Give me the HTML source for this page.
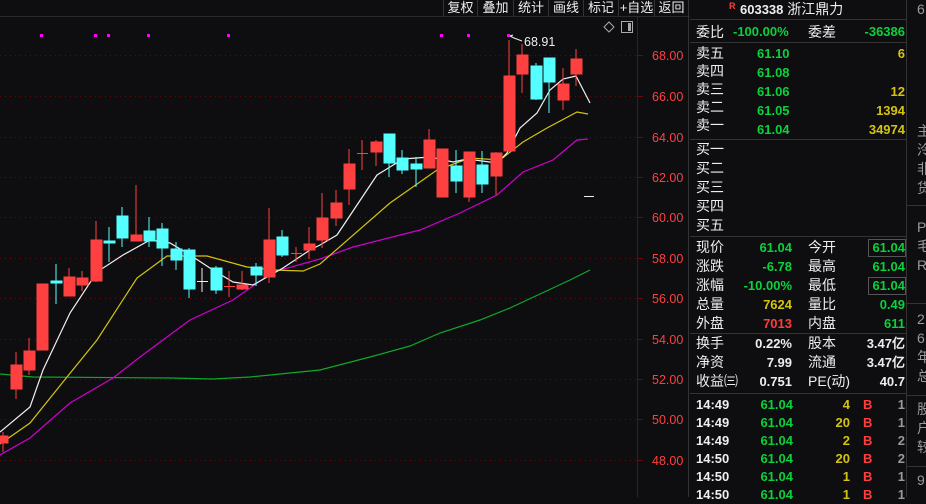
<!DOCTYPE html>
<html><head><meta charset="utf-8"><style>
*{margin:0;padding:0;box-sizing:border-box}
body{width:926px;height:497px;background:#0e0e11;overflow:hidden;position:relative;font-family:"Liberation Sans","Noto Sans CJK SC",sans-serif;color:#fff}
.tb{position:absolute;top:0;height:16px;font-size:13px;line-height:16px;color:#eee;border-left:1px solid #333}
.p{position:absolute;font-size:14px;line-height:18px;white-space:nowrap}
.w{color:#eee}.g{color:#0bd13b}.y{color:#d4c40f}.r{color:#ff3d3d}.gr{color:#999}
.num{font-family:"Liberation Sans",sans-serif;font-weight:bold}
.rt{text-align:right}
.hl{position:absolute;left:690px;width:216px;height:1px;background:#333}
.box{position:absolute;border:1px solid #555}
</style></head><body>
<div style="position:absolute;left:0;top:16px;width:690px;height:1px;background:#2a2a2a"></div>
<div class="tb" style="left:443px;width:34px;text-align:center">复权</div>
<div class="tb" style="left:477px;width:36px;text-align:center">叠加</div>
<div class="tb" style="left:513px;width:35px;text-align:center">统计</div>
<div class="tb" style="left:548px;width:35px;text-align:center">画线</div>
<div class="tb" style="left:583px;width:35px;text-align:center">标记</div>
<div class="tb" style="left:618px;width:36px;text-align:center">+自选</div>
<div class="tb" style="left:654px;width:34px;text-align:center">返回</div>
<svg style="position:absolute;left:0;top:0" width="690" height="497">
<g stroke="#6a0a0a" stroke-dasharray="1,4" stroke-width="1">
<line x1="0" y1="55.5" x2="637" y2="55.5"/><line x1="0" y1="96.5" x2="637" y2="96.5"/><line x1="0" y1="137.5" x2="637" y2="137.5"/><line x1="0" y1="177.5" x2="637" y2="177.5"/><line x1="0" y1="217.5" x2="637" y2="217.5"/><line x1="0" y1="258.5" x2="637" y2="258.5"/><line x1="0" y1="298.5" x2="637" y2="298.5"/><line x1="0" y1="339.5" x2="637" y2="339.5"/><line x1="0" y1="379.5" x2="637" y2="379.5"/><line x1="0" y1="419.5" x2="637" y2="419.5"/><line x1="0" y1="460.5" x2="637" y2="460.5"/>
</g>
<line x1="637.5" y1="17" x2="637.5" y2="497" stroke="#6a0a0a"/>
<g stroke="#6a0a0a"><line x1="637" y1="55.5" x2="643" y2="55.5"/><line x1="637" y1="96.5" x2="643" y2="96.5"/><line x1="637" y1="137.5" x2="643" y2="137.5"/><line x1="637" y1="177.5" x2="643" y2="177.5"/><line x1="637" y1="217.5" x2="643" y2="217.5"/><line x1="637" y1="258.5" x2="643" y2="258.5"/><line x1="637" y1="298.5" x2="643" y2="298.5"/><line x1="637" y1="339.5" x2="643" y2="339.5"/><line x1="637" y1="379.5" x2="643" y2="379.5"/><line x1="637" y1="419.5" x2="643" y2="419.5"/><line x1="637" y1="460.5" x2="643" y2="460.5"/></g>
<g fill="#ff4040" font-size="12.5" font-family="Liberation Sans">
<text x="652" y="60">68.00</text><text x="652" y="101">66.00</text><text x="652" y="142">64.00</text><text x="652" y="182">62.00</text><text x="652" y="222">60.00</text><text x="652" y="263">58.00</text><text x="652" y="303">56.00</text><text x="652" y="344">54.00</text><text x="652" y="384">52.00</text><text x="652" y="424">50.00</text><text x="652" y="465">48.00</text></g>
<path d="M609 22 l5 5 -5 5 -5 -5z" fill="none" stroke="#aaa"/>
<rect x="621.5" y="21.5" width="11" height="11" fill="none" stroke="#aaa"/><rect x="628" y="23" width="3" height="8" fill="#aaa"/>
<g fill="#ff00ff"><rect x="40" y="34" width="3" height="3"/><rect x="94" y="34" width="3" height="3"/><rect x="107" y="34" width="3" height="3"/><rect x="147" y="34" width="3" height="3"/><rect x="227" y="34" width="3" height="3"/><rect x="440" y="34" width="3" height="3"/><rect x="467" y="34" width="3" height="3"/><rect x="507" y="34" width="3" height="3"/></g>
<polyline fill="none" stroke="#0fa82a" stroke-width="1.2" points="0,374 33,377 170,378 213,379 250,377 300,372 320,370 370,357 410,346 440,333 480,320 510,308 540,294 570,280 590,270"/>
<polyline fill="none" stroke="#d000d0" stroke-width="1.2" points="0,455 30,438 70,403 113,378 140,357 167,337 190,320 233,300 273,272 320,259 353,247 420,230 460,213 497,195 523,172 553,160 577,140 588,139"/>
<polyline fill="none" stroke="#d4c40f" stroke-width="1.2" points="0,444 30,423 67,377 97,340 137,278 167,256 207,256 247,267 273,270 303,271 320,264 390,203 437,170 470,158 500,160 523,142 547,128 577,112 588,114"/>
<polyline fill="none" stroke="#f0f0f0" stroke-width="1.2" points="0,432 30,407 43,370 70,313 97,272 123,255 150,240 170,243 187,253 213,270 233,282 253,285 283,268 310,250 320,245 337,235 377,175 403,159 430,157 453,162 467,159 497,163 507,153 520,128 537,113 550,90 563,79 576,76 590,103"/>
<g stroke="#ff4040" fill="#ff4040">
<line x1="3" y1="432" x2="3" y2="452"/><rect x="-2" y="436" width="10" height="7"/>
<line x1="16" y1="352" x2="16" y2="399"/><rect x="11" y="365" width="11" height="24"/>
<line x1="29" y1="338" x2="29" y2="375"/><rect x="24" y="351" width="11" height="19"/>
<rect x="37" y="284" width="11" height="66"/>
<line x1="69" y1="268" x2="69" y2="296"/><rect x="64" y="277" width="11" height="19"/>
<line x1="82" y1="271" x2="82" y2="291"/><rect x="77" y="278" width="11" height="7"/>
<line x1="96" y1="221" x2="96" y2="282"/><rect x="91" y="240" width="11" height="41"/>
<line x1="136" y1="185" x2="136" y2="241"/><rect x="131" y="235" width="11" height="6"/>
<line x1="229" y1="271" x2="229" y2="297"/><line x1="224" y1="286.5" x2="235" y2="286.5"/>
<line x1="242" y1="271" x2="242" y2="290"/><rect x="237" y="285" width="11" height="4"/>
<line x1="269" y1="208" x2="269" y2="283"/><rect x="264" y="240" width="11" height="37"/>
<line x1="296" y1="247" x2="296" y2="262"/><line x1="291" y1="253.5" x2="302" y2="253.5"/>
<line x1="309" y1="227" x2="309" y2="259"/><rect x="304" y="244" width="11" height="6"/>
<line x1="322" y1="193" x2="322" y2="248"/><rect x="317" y="218" width="11" height="22"/>
<line x1="336" y1="190" x2="336" y2="226"/><rect x="331" y="203" width="11" height="15"/>
<line x1="349" y1="149" x2="349" y2="205"/><rect x="344" y="164" width="11" height="25"/>
<line x1="362" y1="140" x2="362" y2="170"/><line x1="357" y1="153.5" x2="368" y2="153.5"/>
<line x1="376" y1="140" x2="376" y2="166"/><rect x="371" y="142" width="11" height="10"/>
<line x1="429" y1="129" x2="429" y2="168"/><rect x="424" y="140" width="11" height="28"/>
<rect x="437" y="149" width="11" height="48"/>
<line x1="469" y1="152" x2="469" y2="202"/><rect x="464" y="152" width="11" height="45"/>
<line x1="496" y1="152" x2="496" y2="195"/><rect x="491" y="153" width="11" height="23"/>
<line x1="509" y1="40" x2="509" y2="151"/><rect x="504" y="76" width="11" height="75"/>
<line x1="522" y1="44" x2="522" y2="93"/><rect x="517" y="55" width="11" height="19"/>
<line x1="563" y1="68" x2="563" y2="110"/><rect x="558" y="84" width="11" height="16"/>
<line x1="576" y1="49" x2="576" y2="86"/><rect x="571" y="59" width="11" height="15"/>
</g>
<g stroke="#55ffff" fill="#55ffff">
<line x1="56" y1="264" x2="56" y2="304"/><rect x="51" y="281" width="11" height="2"/>
<line x1="109" y1="227" x2="109" y2="262"/><rect x="104" y="241" width="11" height="2"/>
<line x1="122" y1="207" x2="122" y2="247"/><rect x="117" y="216" width="11" height="22"/>
<line x1="149" y1="217" x2="149" y2="247"/><rect x="144" y="231" width="11" height="10"/>
<line x1="162" y1="223" x2="162" y2="266"/><rect x="157" y="229" width="11" height="19"/>
<line x1="176" y1="242" x2="176" y2="270"/><rect x="171" y="249" width="11" height="11"/>
<line x1="189" y1="248" x2="189" y2="298"/><rect x="184" y="250" width="11" height="39"/>
<line x1="216" y1="266" x2="216" y2="294"/><rect x="211" y="268" width="11" height="22"/>
<line x1="256" y1="263" x2="256" y2="286"/><rect x="251" y="267" width="11" height="8"/>
<line x1="282" y1="230" x2="282" y2="257"/><rect x="277" y="237" width="11" height="18"/>
<line x1="389" y1="134" x2="389" y2="177"/><rect x="384" y="134" width="11" height="29"/>
<line x1="402" y1="150" x2="402" y2="174"/><rect x="397" y="158" width="11" height="12"/>
<line x1="416" y1="157" x2="416" y2="187"/><rect x="411" y="164" width="11" height="5"/>
<line x1="456" y1="150" x2="456" y2="193"/><rect x="451" y="166" width="11" height="15"/>
<line x1="482" y1="151" x2="482" y2="193"/><rect x="477" y="165" width="11" height="19"/>
<line x1="536" y1="63" x2="536" y2="100"/><rect x="531" y="66" width="11" height="33"/>
<line x1="549" y1="58" x2="549" y2="113"/><rect x="544" y="58" width="11" height="24"/>
</g>
<g stroke="#eee"><line x1="202" y1="268" x2="202" y2="292"/><line x1="197" y1="281.5" x2="208" y2="281.5"/><line x1="584" y1="196.5" x2="594" y2="196.5"/>
<polyline fill="none" points="510,36 514,38 522,41"/><polyline fill="none" points="510,36 513,35 M510,36 512,39"/></g>
<text x="524" y="46" fill="#eee" font-size="12.5" font-family="Liberation Sans">68.91</text>
</svg>
<div style="position:absolute;left:688px;top:0;width:1px;height:497px;background:#333"></div>
<div style="position:absolute;left:906px;top:0;width:1px;height:497px;background:#333"></div>
<div class="hl" style="top:19px"></div>
<div class="p r" style="left:729px;top:-3px;font-size:9px;font-weight:bold">R</div>
<div class="p w" style="left:740px;top:0;font-size:14px"><span class="num" style="font-size:13px">603338</span> 浙江鼎力</div>
<div class="p w" style="left:696px;top:23px">委比</div><div class="p g num" style="left:733px;top:23px;font-size:13px">-100.00%</div>
<div class="p w" style="left:808px;top:23px">委差</div><div class="p g num rt" style="left:840px;width:65px;top:23px;font-size:13px">-36386</div>
<div class="hl" style="top:42px"></div>
<div class="p w" style="left:696px;top:44px">卖五<br>卖四<br>卖三<br>卖二<br>卖一</div>
<div class="p g num" style="left:757px;top:44px;font-size:13px;line-height:19px">61.10<br>61.08<br>61.06<br>61.05<br>61.04</div>
<div class="p y num rt" style="left:840px;width:65px;top:44px;font-size:13px;line-height:19px">6<br>&nbsp;<br>12<br>1394<br>34974</div>
<div class="hl" style="top:139px"></div>
<div class="p w" style="left:696px;top:140px;line-height:19px">买一<br>买二<br>买三<br>买四<br>买五</div>
<div class="hl" style="top:236px"></div>
<div class="p w" style="left:696px;top:238px;line-height:19px">现价<br>涨跌<br>涨幅<br>总量<br>外盘</div>
<div class="p num rt" style="left:720px;width:72px;top:238px;line-height:19px;font-size:13px"><span class="g">61.04</span><br><span class="g">-6.78</span><br><span class="g">-10.00%</span><br><span class="y">7624</span><br><span class="r">7013</span></div>
<div class="p w" style="left:808px;top:238px;line-height:19px">今开<br>最高<br>最低<br>量比<br>内盘</div>
<div class="p num g rt" style="left:850px;width:55px;top:238px;line-height:19px;font-size:13px">61.04<br>61.04<br>61.04<br>0.49<br>611</div>
<div class="box" style="left:868px;top:239px;width:38px;height:18px"></div>
<div class="box" style="left:868px;top:277px;width:38px;height:18px"></div>
<div class="hl" style="top:333px"></div>
<div class="p w" style="left:696px;top:334px;line-height:19px">换手<br>净资<br>收益㈢</div>
<div class="p w num rt" style="left:720px;width:72px;top:334px;line-height:19px;font-size:13px">0.22%<br>7.99<br>0.751</div>
<div class="p w" style="left:808px;top:334px;line-height:19px">股本<br>流通<br>PE(动)</div>
<div class="p w num rt" style="left:850px;width:55px;top:334px;line-height:19px;font-size:13px">3.47亿<br>3.47亿<br>40.7</div>
<div class="hl" style="top:393px"></div>
<div class="p w num" style="left:696px;top:396px;line-height:18px;font-size:13px">14:49<br>14:49<br>14:49<br>14:50<br>14:50<br>14:50</div>
<div class="p g num rt" style="left:740px;width:53px;top:396px;line-height:18px;font-size:13px">61.04<br>61.04<br>61.04<br>61.04<br>61.04<br>61.04</div>
<div class="p y num rt" style="left:810px;width:40px;top:396px;line-height:18px;font-size:13px">4<br>20<br>2<br>20<br>1<br>1</div>
<div class="p r num" style="left:863px;top:396px;line-height:18px;font-size:13px">B<br>B<br>B<br>B<br>B<br>B</div>
<div class="p gr num rt" style="left:890px;width:15px;top:396px;line-height:18px;font-size:13px">1<br>1<br>2<br>2<br>1<br>1</div>
<div class="p gr" style="left:917px;top:0;line-height:18px">6</div>
<div class="p gr" style="left:917px;top:122px;line-height:19px">主<br>泠<br>非<br>货</div>
<div class="hl" style="left:906px;width:20px;top:205px"></div>
<div class="p gr" style="left:917px;top:218px;line-height:19px">P<br>毛<br>R</div>
<div class="hl" style="left:906px;width:20px;top:303px"></div>
<div class="p gr" style="left:917px;top:310px;line-height:19px">2<br>6<br>年<br>总</div>
<div class="hl" style="left:906px;width:20px;top:395px"></div>
<div class="p gr" style="left:917px;top:400px;line-height:19px">股<br>户<br>较</div>
<div class="hl" style="left:906px;width:20px;top:466px"></div>
<div class="p gr" style="left:917px;top:471px">9</div>
</body></html>
